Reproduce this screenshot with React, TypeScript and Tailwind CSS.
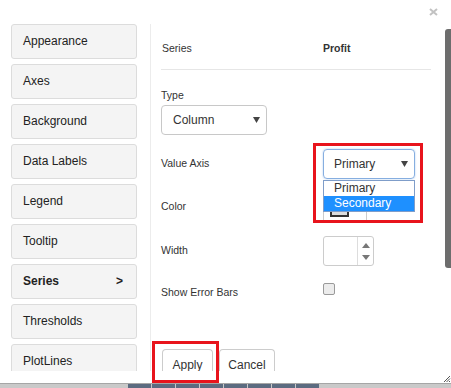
import React from "react";

const NAV = [
  "Appearance",
  "Axes",
  "Background",
  "Data Labels",
  "Legend",
  "Tooltip",
  "Series",
  "Thresholds",
  "PlotLines",
];

function Caret() {
  return (
    <svg width="7" height="6" viewBox="0 0 7 6" className="shrink-0">
      <path d="M0 0 L7 0 L3.5 6 Z" fill="#444" />
    </svg>
  );
}

function Row({ label, children, className = "" }: { label: string; children?: React.ReactNode; className?: string }) {
  return (
    <div className={`flex h-[30px] items-center ${className}`}>
      <div className="w-[162px] shrink-0 text-[10.5px] leading-[14px] text-[#333] -mt-[2px]">{label}</div>
      {children}
    </div>
  );
}

export default function App() {
  return (
    <div className="relative w-[451px] h-[388px] overflow-hidden bg-white font-['Liberation_Sans',Arial,sans-serif] text-[#222]">
      <div className="flex h-[383px] flex-col">
        <div className="h-[24px] shrink-0" />
        <div className="flex h-[347px] overflow-hidden">
          {/* nav */}
          <div className="flex w-[150px] shrink-0 flex-col gap-[5px] pl-[11px]">
            {NAV.map((n) => (
              <div
                key={n}
                className="flex h-[35px] w-[126px] shrink-0 items-center justify-between rounded-[3px] border border-[#dcdcdc] bg-[#f4f4f4] pb-[1px] pl-[11px] pr-[13px] text-[12px]"
              >
                <span className={n === "Series" ? "font-bold" : ""}>{n}</span>
                {n === "Series" && <span className="font-bold">&gt;</span>}
              </div>
            ))}
          </div>

          {/* content */}
          <div className="flex-1 border-l border-[#ececec] pl-[10px] pr-[20px]">
            <div className="flex border-b border-[#e6e6e6] pb-[14px] pt-[17px] text-[10.5px] leading-[14px] text-[#333]">
              <div className="w-[162px] pl-[1px]">Series</div>
              <div className="font-bold">Profit</div>
            </div>

            <div className="mt-[18px] text-[10.5px] leading-[14px] text-[#333]">Type</div>
            <div className="mt-[3px] flex h-[30px] w-[106px] items-center justify-between rounded-[4px] border border-[#c8c8c8] pl-[11px] pr-[6px] text-[12px] text-[#333]">
              <span>Column</span>
              <Caret />
            </div>

            <Row label="Value Axis" className="mt-[14px]">
              <div className="relative">
                <div className="flex h-[30px] w-[92px] items-center justify-between rounded-[4px] border border-[#86aee0] pl-[10px] pr-[6px] text-[12px] text-[#333] shadow-[0_0_2px_#a9c8ee]">
                  <span>Primary</span>
                  <Caret />
                </div>
                <div className="absolute left-0 top-[31px] z-10 w-[92px] border border-[#7f9dc9] bg-white text-[12px] leading-[15px]">
                  <div className="pl-[10px] text-[#333]">Primary</div>
                  <div className="bg-[#1e90ff] pl-[10px] text-white">Secondary</div>
                </div>
              </div>
            </Row>

            <Row label="Color" className="mt-[13px]">
              <div className="flex h-[30px] w-[44px] items-center border border-[#ccc] pl-[6px]">
                <div className="h-[20px] w-[19px] border-2 border-[#333] bg-[#ddd]" />
              </div>
            </Row>

            <Row label="Width" className="mt-[14px]">
              <div className="flex h-[30px] w-[51px] rounded-[3px] border border-[#ccc]">
                <div className="flex-1" />
                <div className="flex w-[16px] flex-col items-center justify-center gap-[7px] border-l border-[#ddd]">
                  <svg width="8" height="5" viewBox="0 0 8 5"><path d="M0 5 L8 5 L4 0 Z" fill="#777" /></svg>
                  <svg width="8" height="5" viewBox="0 0 8 5"><path d="M0 0 L8 0 L4 5 Z" fill="#777" /></svg>
                </div>
              </div>
            </Row>

            <div className="mt-[12px] flex h-[30px] items-start">
              <div className="w-[162px] shrink-0 pt-[7px] text-[10.5px] leading-[14px] text-[#333]">Show Error Bars</div>
              <div className="mt-[5px] h-[12px] w-[12px] rounded-[2px] border border-[#9a9a9a] bg-[#ececec]" />
            </div>

            <div className="mt-[41px] flex gap-[6px] pl-[1px]">
              <div className="flex h-[28px] w-[51px] items-start justify-center rounded-t-[4px] border border-b-0 border-[#ccc] pt-[6px] text-[12px] text-[#333]">
                Apply
              </div>
              <div className="flex h-[28px] w-[56px] items-start justify-center rounded-t-[4px] border border-b-0 border-[#ccc] pt-[6px] text-[12px] text-[#333]">
                Cancel
              </div>
            </div>
          </div>
        </div>
        <div className="flex-1" />
      </div>

      {/* bottom page strip */}
      <div className="h-[1px] bg-[#a6a6a6]" />
      <div className="flex h-[4px] bg-[#c9c9c9] pl-[128px]">
        {[0, 1, 2, 3, 4, 5, 6, 7].map((i) => (
          <div key={i} className="mr-[1px] h-full w-[23px] bg-[#5c6b80]" />
        ))}
      </div>

      {/* close */}
      <svg className="absolute left-[429px] top-[8px]" width="9" height="8" viewBox="0 0 9 8">
        <path d="M1 1 L8 7 M8 1 L1 7" stroke="#c2c2c2" strokeWidth="2" />
      </svg>

      {/* scrollbar */}
      <div className="absolute left-[445px] top-[29px] h-[239px] w-[6px] rounded-l-[3px] bg-[#6d6d6d]" />

      {/* resize grip */}
      <svg className="absolute left-[443px] top-[375px]" width="8" height="8" viewBox="0 0 8 8">
        <path d="M7 1 L1 7 M7 3.5 L3.5 7 M7 6 L6 7" stroke="#555" strokeWidth="1" />
      </svg>

      {/* annotation boxes */}
      <div className="pointer-events-none absolute left-[313px] top-[143px] h-[80px] w-[110px] border-[3px] border-[#e8141c]" />
      <div className="pointer-events-none absolute left-[152px] top-[341px] h-[42px] w-[67px] border-[3px] border-[#e8141c]" />
    </div>
  );
}
